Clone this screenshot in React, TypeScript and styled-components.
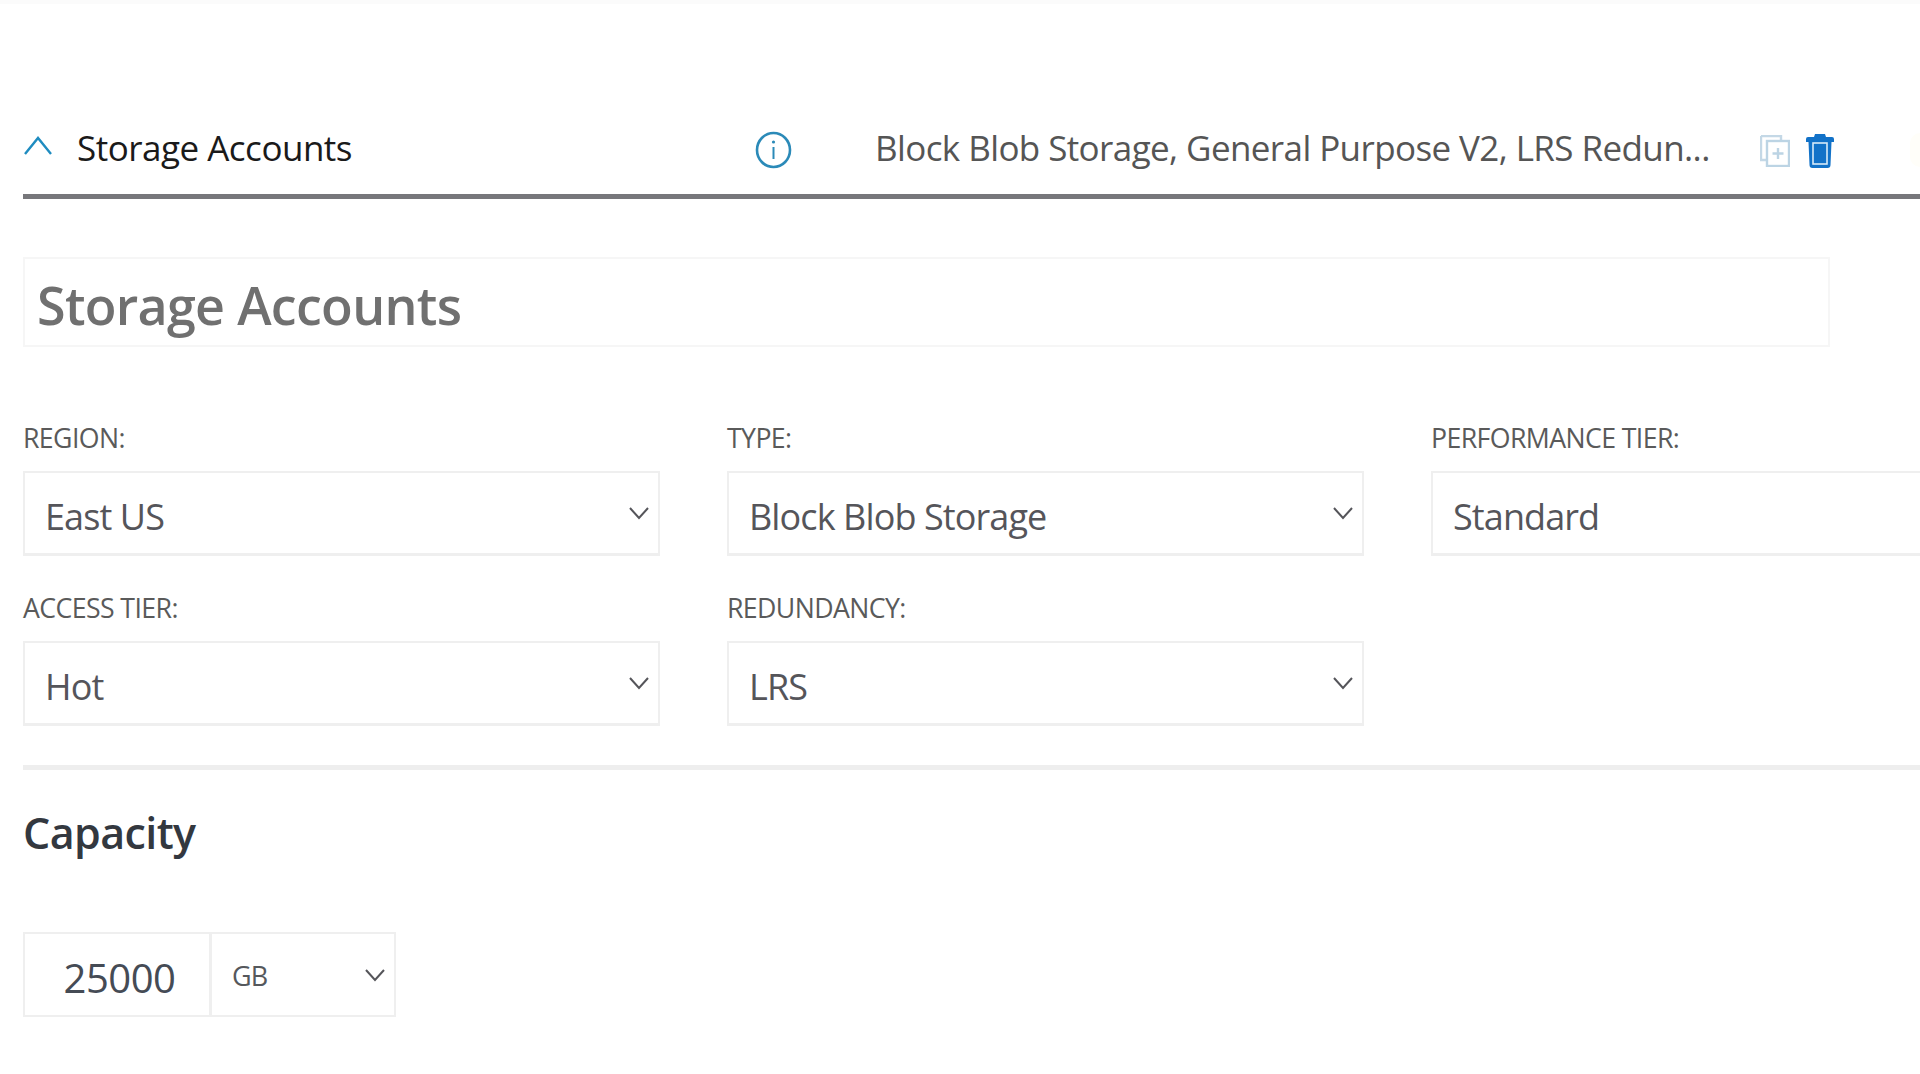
import React from "react";
import styled, { createGlobalStyle } from "styled-components";

const GlobalStyle = createGlobalStyle`
  html, body {
    margin: 0;
    padding: 0;
    background: #fff;
    overflow: hidden;
  }
`;

const Page = styled.div`
  width: 1920px;
  height: 1074px;
  overflow: hidden;
  box-sizing: border-box;
  border-top: 4px solid #fbfbfb;
  padding: 110px 0 0 23px;
  font-family: "Open Sans", "Noto Sans", sans-serif;
  color: #555;
`;

const AccordionHeader = styled.div`
  display: flex;
  align-items: center;
  height: 85px;
  box-sizing: border-box;
  border-bottom: 5px solid #77777b;
  padding-bottom: 14px;
`;

const Toggle = styled.svg`
  width: 30px;
  height: 22px;
  margin-right: 24px;
  margin-bottom: 5px;
  flex: none;
`;

const HeaderTitle = styled.div`
  width: 678px;
  flex: none;
  font-size: 35px;
  letter-spacing: -0.5px;
  color: #1a1a1a;
  white-space: nowrap;
`;

const InfoIcon = styled.svg`
  width: 37px;
  height: 38px;
  flex: none;
  margin-right: 83px;
  margin-top: 6px;
`;

const Summary = styled.div`
  width: 885px;
  flex: none;
  font-size: 35px;
  letter-spacing: -0.6px;
  color: #555;
  white-space: nowrap;
`;

const ActionIcon = styled.svg<{ $gap?: number }>`
  flex: none;
  margin-top: 7px;
  margin-right: ${(p) => p.$gap ?? 0}px;
`;

const EdgeGlow = styled.div`
  width: 10px;
  height: 34px;
  margin-left: auto;
  margin-top: 6px;
  background: #fffef9;
  border-radius: 10px 0 0 10px;
`;

const NameBox = styled.div`
  width: 1807px;
  height: 90px;
  margin-top: 58px;
  box-sizing: border-box;
  border: 2px solid #f6f6f6;
  padding: 4px 0 0 12px;
  display: flex;
  align-items: center;
  font-size: 52px;
  font-weight: 600;
  letter-spacing: -0.7px;
  color: #707070;
`;

const FormGrid = styled.div`
  display: grid;
  grid-template-columns: repeat(3, 637px);
  column-gap: 67px;
  row-gap: 35px;
  margin-top: 74px;
`;

const Field = styled.div`
  display: flex;
  flex-direction: column;
  gap: 16px;
`;

const Label = styled.div`
  font-size: 26.7px;
  line-height: 34px;
  letter-spacing: -0.6px;
  color: #5a5a5a;
  white-space: nowrap;
`;

const SelectBox = styled.div`
  height: 85px;
  box-sizing: border-box;
  border: 2px solid #efefef;
  border-bottom-width: 3px;
  display: flex;
  align-items: center;
  justify-content: space-between;
  padding: 0 9px 0 20px;
  font-size: 36px;
  letter-spacing: -0.9px;
  color: #55555a;
`;

const SelectText = styled.span`
  position: relative;
  top: 3px;
`;

const Chevron = styled.svg`
  width: 20px;
  height: 14px;
  flex: none;
  margin-bottom: 1px;
`;

const Divider = styled.div`
  height: 5px;
  background: #eeeeee;
  margin-top: 39px;
`;

const SectionTitle = styled.h2`
  margin: 34px 0 0;
  font-size: 43px;
  line-height: 58px;
  font-weight: 600;
  letter-spacing: -0.6px;
  color: #33383f;
`;

const CapacityRow = styled.div`
  display: flex;
  width: 373px;
  height: 85px;
  margin-top: 70px;
  box-sizing: border-box;
  border: 2px solid #efefef;
`;

const CapacityValue = styled.div`
  width: 187px;
  flex: none;
  box-sizing: border-box;
  border-right: 3px solid #efefef;
  display: flex;
  align-items: center;
  justify-content: center;
  padding: 6px 0 0 5px;
  font-size: 40px;
  font-weight: 500;
  letter-spacing: -0.5px;
  color: #454b55;
`;

const UnitSelect = styled.div`
  flex: 1;
  display: flex;
  align-items: center;
  justify-content: space-between;
  padding: 2px 9px 0 20px;
  font-size: 27px;
  letter-spacing: -1px;
  color: #55585c;
`;

const ChevronDown = () => (
  <Chevron viewBox="0 0 20 14" fill="none">
    <path d="M1 2 L10 12 L19 2" stroke="#55555a" strokeWidth="2" />
  </Chevron>
);

const Select = ({ value }: { value: string }) => (
  <SelectBox>
    <SelectText>{value}</SelectText>
    <ChevronDown />
  </SelectBox>
);

const fields = [
  { label: "REGION:", value: "East US" },
  { label: "TYPE:", value: "Block Blob Storage" },
  { label: "PERFORMANCE TIER:", value: "Standard" },
  { label: "ACCESS TIER:", value: "Hot" },
  { label: "REDUNDANCY:", value: "LRS" },
];

export default function App() {
  return (
    <Page>
      <GlobalStyle />
      <AccordionHeader>
        <Toggle viewBox="0 0 30 22" fill="none">
          <path d="M2 20 L15 4 L28 20" stroke="#1f8cc0" strokeWidth="2.4" />
        </Toggle>
        <HeaderTitle>Storage Accounts</HeaderTitle>
        <InfoIcon viewBox="0 0 37 38" fill="none">
          <ellipse cx="18.5" cy="19" rx="16.5" ry="17" stroke="#2b8ab8" strokeWidth="2.6" />
          <circle cx="18.5" cy="11" r="1.6" fill="#2b8ab8" />
          <path d="M18.5 16 V28" stroke="#2b8ab8" strokeWidth="2" />
        </InfoIcon>
        <Summary>Block Blob Storage, General Purpose V2, LRS Redun...</Summary>
        <ActionIcon width="30" height="32" viewBox="0 0 30 32" fill="none" $gap={16}>
          <path d="M1 1 H21 V5 M1 1 V25 H6" stroke="#c4d8e6" strokeWidth="2.4" />
          <rect x="7" y="6" width="22" height="25" stroke="#bcd4e4" strokeWidth="2.4" fill="#fff" />
          <path d="M18 13 V24 M12.5 18.5 H23.5" stroke="#bcd4e4" strokeWidth="2.4" />
        </ActionIcon>
        <ActionIcon width="28" height="34" viewBox="0 0 28 34" fill="none">
          <path d="M9 0 H19 L20 3 H26 A2 2 0 0 1 28 5 V8 H0 V5 A2 2 0 0 1 2 3 H8 Z" fill="#1272c8" />
          <path d="M2.5 8 H25.5 L24.5 31 A3 3 0 0 1 21.5 34 H6.5 A3 3 0 0 1 3.5 31 Z" fill="#1272c8" />
          <rect x="7" y="9" width="14" height="21" fill="#1272c8" stroke="#d8eaf8" strokeWidth="1.6" />
        </ActionIcon>
        <EdgeGlow />
      </AccordionHeader>

      <NameBox>Storage Accounts</NameBox>

      <FormGrid>
        {fields.map((f) => (
          <Field key={f.label}>
            <Label>{f.label}</Label>
            <Select value={f.value} />
          </Field>
        ))}
      </FormGrid>

      <Divider />

      <SectionTitle>Capacity</SectionTitle>

      <CapacityRow>
        <CapacityValue>25000</CapacityValue>
        <UnitSelect>
          GB
          <ChevronDown />
        </UnitSelect>
      </CapacityRow>
    </Page>
  );
}
